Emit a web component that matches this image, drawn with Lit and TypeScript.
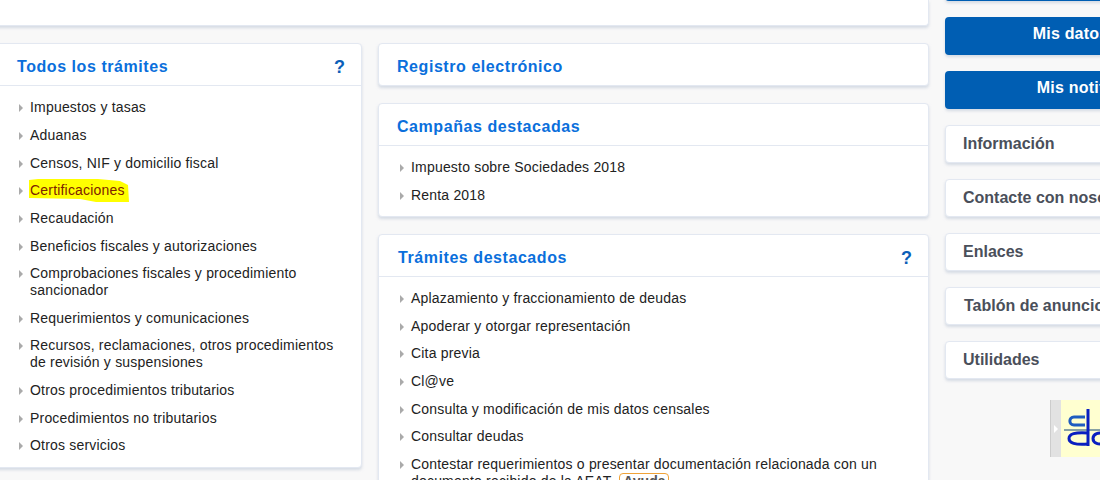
import { LitElement, html, css, svg } from "lit";
import { customElement } from "lit/decorators.js";

const left = [
  "Impuestos y tasas",
  "Aduanas",
  "Censos, NIF y domicilio fiscal",
  "Certificaciones",
  "Recaudación",
  "Beneficios fiscales y autorizaciones",
  "Comprobaciones fiscales y procedimiento sancionador",
  "Requerimientos y comunicaciones",
  "Recursos, reclamaciones, otros procedimientos de revisión y suspensiones",
  "Otros procedimientos tributarios",
  "Procedimientos no tributarios",
  "Otros servicios",
];
const campaigns = ["Impuesto sobre Sociedades 2018", "Renta 2018"];
const featured = [
  "Aplazamiento y fraccionamiento de deudas",
  "Apoderar y otorgar representación",
  "Cita previa",
  "Cl@ve",
  "Consulta y modificación de mis datos censales",
  "Consultar deudas",
];
const side = ["Información", "Contacte con nosotros", "Enlaces", "Tablón de anuncios", "Utilidades"];

@customElement("app-root")
export class AppRoot extends LitElement {
  static styles = css`
    :host {
      display: block;
      width: 1100px;
      height: 480px;
      overflow: hidden;
      background: #f8f8f8;
      font-family: "Liberation Sans", Arial, sans-serif;
      color: #222;
    }
    .page {
      display: flex;
      gap: 16px;
      width: 1300px;
      margin-left: -20px;
    }
    .main {
      width: 949px;
      flex: none;
    }
    .card {
      background: #fff;
      border: 1px solid #e3e8f1;
      border-radius: 4px;
      box-shadow: 0 2px 3px rgba(190, 200, 215, 0.6);
    }
    .top {
      height: 26px;
      box-sizing: border-box;
      border-top: 0;
      border-radius: 0 0 4px 4px;
    }
    .cols {
      display: flex;
      gap: 16px;
      margin-top: 17px;
    }
    .col-left {
      width: 382px;
      flex: none;
      box-sizing: border-box;
      height: 425px;
    }
    .col-mid {
      flex: 1;
      display: flex;
      flex-direction: column;
      gap: 17px;
    }
    .head {
      display: flex;
      justify-content: space-between;
      align-items: center;
      height: 41px;
      box-sizing: border-box;
      padding: 5px 16px 0 18px;
      font-size: 16px;
      font-weight: 700;
      letter-spacing: 0.56px;
      color: #0a6fdc;
    }
    .col-left .head {
      padding-left: 36px;
    }
    .featured .head {
      padding-left: 19px;
    }
    .line {
      height: 42px;
      border-bottom: 1px solid #e3e8f1;
    }
    .help {
      color: #0b5fb8;
      font-size: 18px;
      letter-spacing: 0;
    }
    ul {
      list-style: none;
      margin: 0;
      padding: 13px 20px 12.7px 38px;
      display: flex;
      flex-direction: column;
      gap: 10.6px;
      font-size: 14px;
      line-height: 17px;
    }
    .col-left ul {
      padding-top: 13.32px;
      gap: 10.65px;
    }
    .col-mid ul {
      padding-left: 21px;
    }
    li {
      display: flex;
      gap: 7px;
      position: relative;
    }
    .tri {
      flex: none;
      width: 0;
      height: 0;
      margin-top: 5px;
      border-left: 4px solid #aaa;
      border-top: 4px solid transparent;
      border-bottom: 4px solid transparent;
    }
    .text {
      position: relative;
      letter-spacing: 0.19px;
    }
    .mark {
      position: absolute;
      left: -2px;
      top: -5px;
      width: 102px;
      height: 26px;
    }
    .hl {
      position: relative;
      color: #7d2200;
    }
    .ayuda {
      display: inline-block;
      border: 1px solid #f0a338;
      border-radius: 4px;
      padding: 0 2.5px 0 3px;
      margin-left: 1px;
      font-weight: 700;
      letter-spacing: 0;
      color: #555;
      line-height: 15px;
    }
    .aside {
      width: 316px;
      flex: none;
      margin-top: -37px;
      display: flex;
      flex-direction: column;
      gap: 16px;
    }
    .btn {
      height: 38px;
      box-sizing: border-box;
      padding-bottom: 4px;
      background: #005eb3;
      border-radius: 4px;
      color: #fff;
      font-size: 16px;
      font-weight: 700;
      letter-spacing: 0.2px;
      display: flex;
      align-items: center;
      justify-content: center;
      box-shadow: 0 2px 3px rgba(190, 200, 215, 0.6);
    }
    .btn.notif {
      padding-left: 10px;
    }
    .side {
      height: 38px;
      box-sizing: border-box;
      display: flex;
      align-items: center;
      padding: 0 0 1px 17px;
      font-size: 16px;
      font-weight: 700;
      color: #4a4f5a;
    }
    .side.tablon {
      padding-left: 18px;
    }
    .logo {
      display: flex;
      align-self: flex-start;
      margin: 5px 0 0 105px;
      height: 57px;
      width: 200px;
    }
    .strip {
      width: 11px;
      flex: none;
      background: #e2e2e2;
      border-left: 1px solid #ccc;
      box-sizing: border-box;
      display: flex;
      align-items: center;
      justify-content: center;
    }
    .strip i {
      width: 0;
      height: 0;
      border-left: 4px solid #fff;
      border-top: 4px solid transparent;
      border-bottom: 4px solid transparent;
    }
    .pic {
      flex: 1;
      background: #ffffd0;
    }
    .pic svg {
      display: block;
    }
  `;

  private item(t: string) {
    return html`<li><span class="tri"></span><span class="text">${t}</span></li>`;
  }

  private leftItem(t: string) {
    if (t !== "Certificaciones") return this.item(t);
    return html`<li>
      <span class="tri"></span>
      <span class="text">
        <svg class="mark" viewBox="0 0 102 26">
          ${svg`<path fill="#ffff00" d="M1 3 L10 2 L70 2 L92 4 L100 8 L101 25 L68 25 L52 22 L1 21 Z" />`}
        </svg>
        <span class="hl">${t}</span>
      </span>
    </li>`;
  }

  render() {
    return html`
      <div class="page">
        <div class="main">
          <div class="card top"></div>
          <div class="cols">
            <section class="card col-left">
              <div class="head line"><span>Todos los trámites</span><span class="help">?</span></div>
              <ul>${left.map((t) => this.leftItem(t))}</ul>
            </section>
            <div class="col-mid">
              <section class="card">
                <div class="head"><span>Registro electrónico</span></div>
              </section>
              <section class="card">
                <div class="head line"><span>Campañas destacadas</span></div>
                <ul>${campaigns.map((t) => this.item(t))}</ul>
              </section>
              <section class="card featured">
                <div class="head line"><span>Trámites destacados</span><span class="help">?</span></div>
                <ul>
                  ${featured.map((t) => this.item(t))}
                  <li>
                    <span class="tri"></span>
                    <span class="text"
                      >Contestar requerimientos o presentar documentación relacionada con un documento recibido de la
                      AEAT. <span class="ayuda">Ayuda</span></span
                    >
                  </li>
                </ul>
              </section>
            </div>
          </div>
        </div>
        <aside class="aside">
          <div class="btn">Mis trámites</div>
          <div class="btn">Mis datos fiscales</div>
          <div class="btn notif">Mis notificaciones</div>
          ${side.map((t) => html`<div class="card side ${t.startsWith("Tabl") ? "tablon" : ""}">${t}</div>`)}
          <div class="logo">
            <div class="strip"><i></i></div>
            <div class="pic">
              <svg width="189" height="57" viewBox="0 0 189 57">
                <path d="M24 17 H13 C7.5 17 7.5 25 13 25 H24" fill="none" stroke="#1f5cc0" stroke-width="3" />
                <path d="M3 30 H60" stroke="#5f8296" stroke-width="1.5" />
                <path d="M27 9 V46" stroke="#0a1fc0" stroke-width="3" />
                <path d="M27 33 C14 32 8 34 8 38.5 C8 43 14 45 27 44" fill="none" stroke="#0a1fc0" stroke-width="3" />
                <path d="M46 33 C37 32 32 34 32 38.5 C32 43 37 45 46 44" fill="none" stroke="#0a1fc0" stroke-width="3" />
              </svg>
            </div>
          </div>
        </aside>
      </div>
    `;
  }
}
